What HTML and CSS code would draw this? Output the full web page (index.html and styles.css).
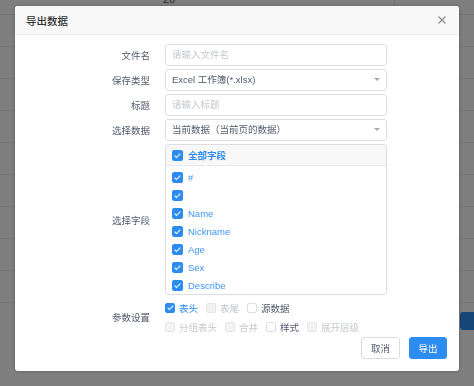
FILE: index.html
```html
<!DOCTYPE html>
<html lang="zh-CN">
<head>
    <meta charset="UTF-8">
    <title>导出数据</title>
    <link rel="stylesheet" href="styles.css">
</head>
<body>
    <div class="table">
        <div class="row first"><div class="cell">26</div><div class="cell"></div></div>
        <div class="row"></div>
        <div class="row"></div>
        <div class="row"></div>
        <div class="row"></div>
        <div class="row"></div>
        <div class="row"></div>
        <div class="row"></div>
        <div class="row"></div>
        <div class="row"></div>
        <div class="pager"><span class="pager-btn"></span></div>
    </div>

    <div class="mask"></div>

    <div class="modal">
        <div class="modal-header">
            <span class="modal-title">导出数据</span>
            <svg class="close" width="8" height="8" viewBox="0 0 8 8">
                <path d="M0.5 0.5 L7.5 7.5 M7.5 0.5 L0.5 7.5" stroke="#888" stroke-width="1.1" fill="none"/>
            </svg>
        </div>
        <div class="modal-body">
            <div class="form">
                <label class="label">文件名</label>
                <div class="input placeholder">请输入文件名</div>

                <label class="label">保存类型</label>
                <div class="input select">Excel 工作簿(*.xlsx)<span class="arrow"></span></div>

                <label class="label">标题</label>
                <div class="input placeholder">请输入标题</div>

                <label class="label">选择数据</label>
                <div class="input select">当前数据（当前页的数据）<span class="arrow"></span></div>

                <label class="label">选择字段</label>
                <div class="fields">
                    <div class="fields-head"><span class="cb checked"></span>全部字段</div>
                    <div class="fields-list">
                        <div class="field"><span class="cb checked"></span>#</div>
                        <div class="field"><span class="cb checked"></span></div>
                        <div class="field"><span class="cb checked"></span>Name</div>
                        <div class="field"><span class="cb checked"></span>Nickname</div>
                        <div class="field"><span class="cb checked"></span>Age</div>
                        <div class="field"><span class="cb checked"></span>Sex</div>
                        <div class="field"><span class="cb checked"></span>Describe</div>
                    </div>
                </div>

                <label class="label">参数设置</label>
                <div class="params">
                    <div class="param-row">
                        <span class="opt on"><span class="cb small checked"></span>表头</span>
                        <span class="opt off"><span class="cb small disabled"></span>表尾</span>
                        <span class="opt"><span class="cb small"></span>源数据</span>
                    </div>
                    <div class="param-row">
                        <span class="opt off"><span class="cb small disabled"></span>分组表头</span>
                        <span class="opt off"><span class="cb small disabled"></span>合并</span>
                        <span class="opt"><span class="cb small"></span>样式</span>
                        <span class="opt off"><span class="cb small disabled"></span>展开层级</span>
                    </div>
                </div>
            </div>
            <div class="footer">
                <button class="btn">取消</button>
                <button class="btn primary">导出</button>
            </div>
        </div>
    </div>
</body>
</html>
```

FILE: styles.css
```css
body {
    margin: 0;
    background: #fff;
    font-family: "Liberation Sans", "Noto Sans CJK SC", sans-serif;
    font-size: 9.5px;
    color: #515a6e;
    overflow: hidden;
}
.table {
    margin-top: -17px;
}
.row {
    height: 32px;
    border-bottom: 1px solid #e8eaec;
    box-sizing: border-box;
}
.row.first {
    display: grid;
    grid-template-columns: 395px 1fr;
}
.row.first .cell:first-child {
    border-right: 1px solid #e8eaec;
    padding-left: 163px;
    line-height: 32px;
    font-size: 11px;
    color: #515a6e;
}
.pager {
    display: flex;
    justify-content: flex-end;
    padding-top: 9px;
    margin-right: -20px;
}
.pager-btn {
    width: 34px;
    height: 18px;
    border-radius: 3px;
    background: #2d8cf0;
}
.mask {
    position: fixed;
    top: 0;
    left: 0;
    right: 0;
    bottom: 0;
    background: rgba(0, 0, 0, 0.5);
}
.modal {
    position: fixed;
    left: 15px;
    top: 6px;
    width: 444px;
    height: 365px;
    background: #fff;
    border-radius: 3px;
    box-shadow: 0 0 4px rgba(0, 0, 0, 0.25);
    overflow: hidden;
}
.modal-header {
    height: 29px;
    box-sizing: border-box;
    border-bottom: 1px solid #eceef0;
    background: #f8f8f9;
    padding: 0 11px;
    display: flex;
    align-items: center;
    justify-content: space-between;
}
.modal-title {
    font-size: 10.5px;
    color: #333;
    font-weight: 500;
}
.close {
    margin-right: 2px;
}
.modal-body {
    padding-top: 9px;
}
.form {
    display: grid;
    grid-template-columns: 135px 222px;
    column-gap: 15px;
    row-gap: 3px;
}
.label {
    align-self: center;
    text-align: right;
    color: #515a6e;
}
.input {
    height: 22px;
    box-sizing: border-box;
    border: 1px solid #dcdee2;
    border-radius: 3px;
    padding: 0 6px;
    line-height: 20px;
    position: relative;
}
.placeholder {
    color: #c5c8ce;
}
.arrow {
    position: absolute;
    right: 6px;
    top: 8px;
    width: 0;
    height: 0;
    border-left: 3px solid transparent;
    border-right: 3px solid transparent;
    border-top: 3px solid #a8abb2;
}
.fields {
    border: 1px solid #dcdee2;
    border-radius: 3px;
    overflow: hidden;
}
.fields-head {
    height: 20px;
    background: #f8f8f9;
    border-bottom: 1px solid #e8eaec;
    display: flex;
    align-items: center;
    padding-left: 6px;
    color: #2d8cf0;
    font-weight: bold;
}
.fields-list {
    padding: 2px 0 0 6px;
}
.field {
    height: 18px;
    display: flex;
    align-items: center;
    color: #3f95f2;
}
.cb {
    width: 11px;
    height: 11px;
    box-sizing: border-box;
    border: 1px solid #dcdee2;
    border-radius: 2px;
    background: #fff;
    margin-right: 5px;
    flex: none;
    position: relative;
}
.cb.small {
    width: 10px;
    height: 10px;
    margin-right: 4px;
}
.cb.checked {
    background: #2d8cf0;
    border-color: #2d8cf0;
}
.cb.checked::after {
    content: "";
    position: absolute;
    left: 3px;
    top: 1px;
    width: 2px;
    height: 5px;
    border-right: 1.5px solid #fff;
    border-bottom: 1.5px solid #fff;
    transform: rotate(45deg);
}
.cb.small.checked::after {
    left: 2.5px;
    top: 0.5px;
}
.cb.disabled {
    background: #f3f3f3;
    border-color: #e3e5e8;
}
.params {
    padding-top: 0;
}
.param-row {
    height: 19px;
    display: flex;
    align-items: center;
}
.opt {
    display: flex;
    align-items: center;
    margin-right: 8px;
    color: #515a6e;
}
.opt.on {
    color: #2d8cf0;
}
.opt.off {
    color: #c5c8ce;
}
.footer {
    display: flex;
    justify-content: flex-end;
    gap: 9px;
    padding-right: 12px;
    margin-top: 1px;
}
.btn {
    height: 22px;
    width: 39px;
    box-sizing: border-box;
    border: 1px solid #dcdee2;
    border-radius: 3px;
    background: #fff;
    color: #515a6e;
    font-family: inherit;
    font-size: 9.5px;
    padding: 0;
}
.btn.primary {
    width: 38px;
    background: #2d8cf0;
    border-color: #2d8cf0;
    color: #fff;
}
```
